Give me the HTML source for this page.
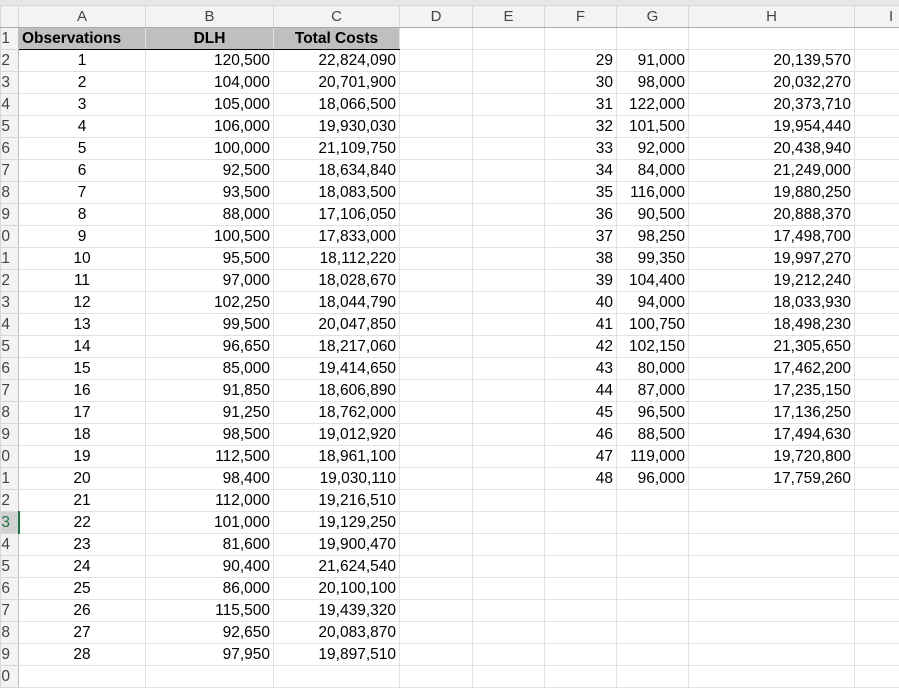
<!DOCTYPE html>
<html><head><meta charset="utf-8"><style>
body{margin:0;background:#fff;width:899px;height:684px;overflow:hidden;font-family:"Liberation Sans",sans-serif;}
.top{position:absolute;left:0;top:0;width:899px;height:5px;background:#e6e6e6;}
table{position:absolute;left:0;top:5px;width:914px;border-collapse:collapse;table-layout:fixed;font-size:15.5px;color:#000;}
td{padding:0 3px;height:21px;border:1px solid #e1e1e1;white-space:nowrap;overflow:hidden;line-height:21px;}
tr.h td{background:#f3f3f3;color:#444;text-align:center;border-color:#d8d8d8;border-bottom:1px solid #aaa;font-size:15px;}
td.r{background:#f3f3f3;color:#444;padding:0;border-color:#d8d8d8;border-right:1px solid #bbb;}
td.r div{width:17px;overflow:hidden;direction:rtl;text-align:right;}
td.r div span{padding-right:8px;}
td.c{text-align:center}
td.n{text-align:right}
tr.t td.g{background:#bfbfbf;font-weight:bold;border-bottom:1px solid #000;}
td.sel{background:#d2d2d2;color:#217346;border-right:2px solid #217346;}
</style></head><body>
<div class="top"></div>
<table>
<colgroup><col style="width:18px"><col style="width:127px"><col style="width:128px"><col style="width:126px"><col style="width:73px"><col style="width:72px"><col style="width:72px"><col style="width:72px"><col style="width:166px"><col style="width:60px"></colgroup>
<tr class="h"><td class="r"></td><td>A</td><td>B</td><td>C</td><td>D</td><td>E</td><td>F</td><td>G</td><td>H</td><td style="text-align:left;padding-left:34px">I</td></tr>
<tr class="t"><td class="r"><div><span>1</span></div></td><td class="g" style="text-align:left">Observations</td><td class="g c">DLH</td><td class="g c">Total Costs</td><td></td><td></td><td></td><td></td><td></td><td></td></tr>
<tr><td class="r"><div><span>2</span></div></td><td class="c">1</td><td class="n">120,500</td><td class="n">22,824,090</td><td></td><td></td><td class="n">29</td><td class="n">91,000</td><td class="n">20,139,570</td><td></td></tr>
<tr><td class="r"><div><span>3</span></div></td><td class="c">2</td><td class="n">104,000</td><td class="n">20,701,900</td><td></td><td></td><td class="n">30</td><td class="n">98,000</td><td class="n">20,032,270</td><td></td></tr>
<tr><td class="r"><div><span>4</span></div></td><td class="c">3</td><td class="n">105,000</td><td class="n">18,066,500</td><td></td><td></td><td class="n">31</td><td class="n">122,000</td><td class="n">20,373,710</td><td></td></tr>
<tr><td class="r"><div><span>5</span></div></td><td class="c">4</td><td class="n">106,000</td><td class="n">19,930,030</td><td></td><td></td><td class="n">32</td><td class="n">101,500</td><td class="n">19,954,440</td><td></td></tr>
<tr><td class="r"><div><span>6</span></div></td><td class="c">5</td><td class="n">100,000</td><td class="n">21,109,750</td><td></td><td></td><td class="n">33</td><td class="n">92,000</td><td class="n">20,438,940</td><td></td></tr>
<tr><td class="r"><div><span>7</span></div></td><td class="c">6</td><td class="n">92,500</td><td class="n">18,634,840</td><td></td><td></td><td class="n">34</td><td class="n">84,000</td><td class="n">21,249,000</td><td></td></tr>
<tr><td class="r"><div><span>8</span></div></td><td class="c">7</td><td class="n">93,500</td><td class="n">18,083,500</td><td></td><td></td><td class="n">35</td><td class="n">116,000</td><td class="n">19,880,250</td><td></td></tr>
<tr><td class="r"><div><span>9</span></div></td><td class="c">8</td><td class="n">88,000</td><td class="n">17,106,050</td><td></td><td></td><td class="n">36</td><td class="n">90,500</td><td class="n">20,888,370</td><td></td></tr>
<tr><td class="r"><div><span>10</span></div></td><td class="c">9</td><td class="n">100,500</td><td class="n">17,833,000</td><td></td><td></td><td class="n">37</td><td class="n">98,250</td><td class="n">17,498,700</td><td></td></tr>
<tr><td class="r"><div><span>11</span></div></td><td class="c">10</td><td class="n">95,500</td><td class="n">18,112,220</td><td></td><td></td><td class="n">38</td><td class="n">99,350</td><td class="n">19,997,270</td><td></td></tr>
<tr><td class="r"><div><span>12</span></div></td><td class="c">11</td><td class="n">97,000</td><td class="n">18,028,670</td><td></td><td></td><td class="n">39</td><td class="n">104,400</td><td class="n">19,212,240</td><td></td></tr>
<tr><td class="r"><div><span>13</span></div></td><td class="c">12</td><td class="n">102,250</td><td class="n">18,044,790</td><td></td><td></td><td class="n">40</td><td class="n">94,000</td><td class="n">18,033,930</td><td></td></tr>
<tr><td class="r"><div><span>14</span></div></td><td class="c">13</td><td class="n">99,500</td><td class="n">20,047,850</td><td></td><td></td><td class="n">41</td><td class="n">100,750</td><td class="n">18,498,230</td><td></td></tr>
<tr><td class="r"><div><span>15</span></div></td><td class="c">14</td><td class="n">96,650</td><td class="n">18,217,060</td><td></td><td></td><td class="n">42</td><td class="n">102,150</td><td class="n">21,305,650</td><td></td></tr>
<tr><td class="r"><div><span>16</span></div></td><td class="c">15</td><td class="n">85,000</td><td class="n">19,414,650</td><td></td><td></td><td class="n">43</td><td class="n">80,000</td><td class="n">17,462,200</td><td></td></tr>
<tr><td class="r"><div><span>17</span></div></td><td class="c">16</td><td class="n">91,850</td><td class="n">18,606,890</td><td></td><td></td><td class="n">44</td><td class="n">87,000</td><td class="n">17,235,150</td><td></td></tr>
<tr><td class="r"><div><span>18</span></div></td><td class="c">17</td><td class="n">91,250</td><td class="n">18,762,000</td><td></td><td></td><td class="n">45</td><td class="n">96,500</td><td class="n">17,136,250</td><td></td></tr>
<tr><td class="r"><div><span>19</span></div></td><td class="c">18</td><td class="n">98,500</td><td class="n">19,012,920</td><td></td><td></td><td class="n">46</td><td class="n">88,500</td><td class="n">17,494,630</td><td></td></tr>
<tr><td class="r"><div><span>20</span></div></td><td class="c">19</td><td class="n">112,500</td><td class="n">18,961,100</td><td></td><td></td><td class="n">47</td><td class="n">119,000</td><td class="n">19,720,800</td><td></td></tr>
<tr><td class="r"><div><span>21</span></div></td><td class="c">20</td><td class="n">98,400</td><td class="n">19,030,110</td><td></td><td></td><td class="n">48</td><td class="n">96,000</td><td class="n">17,759,260</td><td></td></tr>
<tr><td class="r"><div><span>22</span></div></td><td class="c">21</td><td class="n">112,000</td><td class="n">19,216,510</td><td></td><td></td><td></td><td></td><td></td><td></td></tr>
<tr><td class="r sel"><div><span>23</span></div></td><td class="c">22</td><td class="n">101,000</td><td class="n">19,129,250</td><td></td><td></td><td></td><td></td><td></td><td></td></tr>
<tr><td class="r"><div><span>24</span></div></td><td class="c">23</td><td class="n">81,600</td><td class="n">19,900,470</td><td></td><td></td><td></td><td></td><td></td><td></td></tr>
<tr><td class="r"><div><span>25</span></div></td><td class="c">24</td><td class="n">90,400</td><td class="n">21,624,540</td><td></td><td></td><td></td><td></td><td></td><td></td></tr>
<tr><td class="r"><div><span>26</span></div></td><td class="c">25</td><td class="n">86,000</td><td class="n">20,100,100</td><td></td><td></td><td></td><td></td><td></td><td></td></tr>
<tr><td class="r"><div><span>27</span></div></td><td class="c">26</td><td class="n">115,500</td><td class="n">19,439,320</td><td></td><td></td><td></td><td></td><td></td><td></td></tr>
<tr><td class="r"><div><span>28</span></div></td><td class="c">27</td><td class="n">92,650</td><td class="n">20,083,870</td><td></td><td></td><td></td><td></td><td></td><td></td></tr>
<tr><td class="r"><div><span>29</span></div></td><td class="c">28</td><td class="n">97,950</td><td class="n">19,897,510</td><td></td><td></td><td></td><td></td><td></td><td></td></tr>
<tr><td class="r"><div><span>30</span></div></td><td></td><td></td><td></td><td></td><td></td><td></td><td></td><td></td><td></td></tr>
</table>
</body></html>
